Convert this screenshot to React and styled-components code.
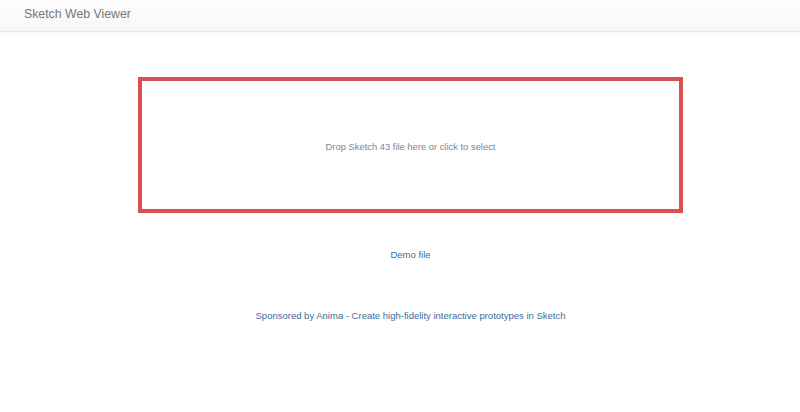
import React from 'react'
import styled, { createGlobalStyle } from 'styled-components'

const GlobalStyle = createGlobalStyle`
  html, body {
    margin: 0;
    padding: 0;
    background: #fff;
    font-family: "Liberation Sans", Arial, sans-serif;
  }
`

const App = () => {
  return (
    <>
      <GlobalStyle />
      <Navbar>
        <Brand>Sketch Web Viewer</Brand>
      </Navbar>
      <Main>
        <DropZone>
          <DropText>Drop Sketch 43 file here or click to select</DropText>
        </DropZone>
        <LinkRow $top={33}>
          <TextLink href="#">Demo file</TextLink>
        </LinkRow>
        <LinkRow $top={45}>
          <TextLink href="#">Sponsored by Anima - Create high-fidelity interactive prototypes in Sketch</TextLink>
        </LinkRow>
      </Main>
    </>
  )
}

export default App

const Navbar = styled.div`
  height: 32px;
  display: flex;
  align-items: center;
  padding-left: 24px;
  box-sizing: border-box;
  background: linear-gradient(to bottom, #ffffff 0%, #f6f6f6 100%);
  border-bottom: 1px solid #e7e7e7;
  box-shadow: 0 1px 3px rgba(0, 0, 0, 0.04);
`

const Brand = styled.span`
  font-size: 12.3px;
  color: #777;
  margin-top: -3px;
`

const Main = styled.div`
  display: flex;
  flex-direction: column;
  align-items: center;
  padding: 45px 0 0 21px;
`

const DropZone = styled.div`
  width: 545px;
  height: 136px;
  box-sizing: border-box;
  border: 4px solid #da5050;
  display: flex;
  align-items: center;
  justify-content: center;
  cursor: pointer;
`

const DropText = styled.span`
  font-size: 9.4px;
  color: #858585;
  margin-top: 3px;
`

const LinkRow = styled.div`
  margin-top: ${p => p.$top}px;
  line-height: 14px;
`

const TextLink = styled.a`
  font-size: 9.5px;
  color: #3c6c9c;
  text-decoration: none;
`
